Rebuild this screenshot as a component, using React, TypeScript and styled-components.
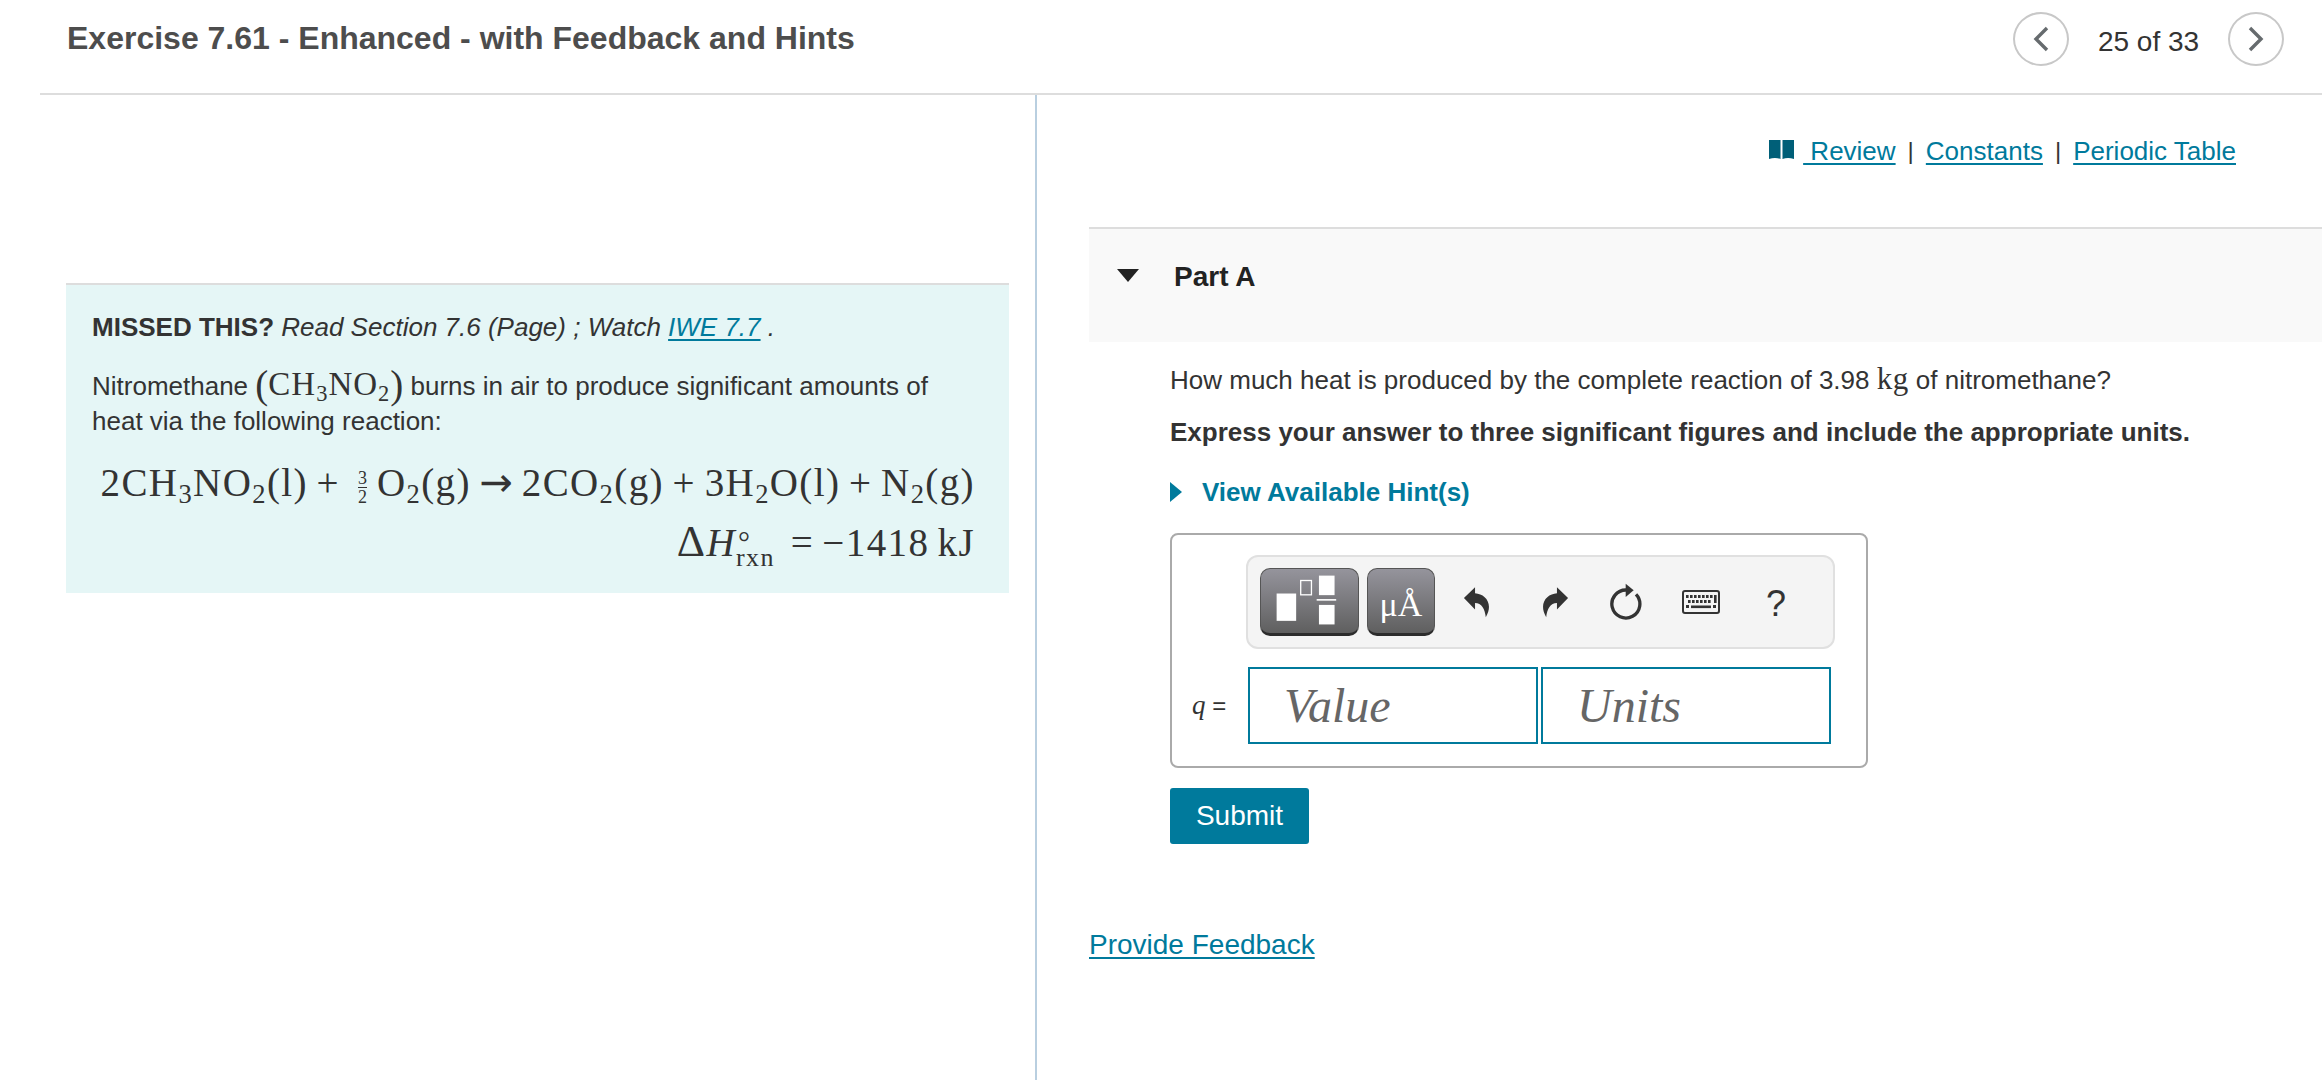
import React from "react";
import styled, { createGlobalStyle } from "styled-components";

const GlobalStyle = createGlobalStyle`
  html, body {
    margin: 0;
    padding: 0;
    background: #ffffff;
    font-family: "Liberation Sans", Arial, sans-serif;
    color: #333333;
  }
  * { box-sizing: border-box; }
`;

const Page = styled.div`
  width: 2322px;
  height: 1080px;
  overflow: hidden;
  padding-left: 40px;
  display: flex;
  flex-direction: column;
`;

const Header = styled.header`
  height: 95px;
  flex: none;
  display: flex;
  align-items: flex-start;
  justify-content: space-between;
  border-bottom: 2px solid #dddddd;
  padding: 12px 38px 0 27px;
`;

const Title = styled.h1`
  margin: 6px 0 0;
  font-size: 32px;
  line-height: 40px;
  font-weight: 700;
  color: #4d4d4d;
`;

const Pager = styled.div`
  display: flex;
  align-items: center;
  height: 54px;
`;

const PagerButton = styled.button`
  width: 56px;
  height: 54px;
  padding: 0;
  border: 2px solid #c8c8c8;
  border-radius: 50%;
  background: #ffffff;
  display: flex;
  align-items: center;
  justify-content: center;
`;

const PagerText = styled.span`
  font-size: 28px;
  line-height: 32px;
  width: 159px;
  text-align: center;
  margin-top: 6px;
`;

const Columns = styled.div`
  flex: 1;
  display: flex;
  min-height: 0;
`;

const LeftPane = styled.section`
  width: 997px;
  flex: none;
  border-right: 2px solid #b9cfe0;
  padding: 188px 26px 0 26px;
`;

const InfoBox = styled.div`
  height: 310px;
  background: #e5f6f6;
  border-top: 2px solid #dddddd;
  padding: 25px 34px 0 26px;
`;

const InfoLine = styled.p`
  margin: 0;
  font-size: 26px;
  line-height: 35px;
`;

const Watch = styled(InfoLine)`
  font-style: italic;
  margin-bottom: 24px;
  b {
    font-style: normal;
  }
`;

const TextLink = styled.a`
  color: #007a9c;
  text-decoration: underline;
  text-underline-offset: 3px;
`;

const MathText = styled.span`
  font-family: "Liberation Serif", "Times New Roman", serif;
  font-size: 33px;
  line-height: 0;
  letter-spacing: 1px;
`;

const KgText = styled(MathText)`
  font-size: 31px;
  letter-spacing: 0.4px;
`;

const InlineParen = styled.span`
  font-family: "Liberation Serif", serif;
  font-size: 1.5em;
  font-weight: 400;
  line-height: 0;
  vertical-align: -0.08em;
`;

const Sub = styled.sub`
  font-size: 0.68em;
  line-height: 0;
  vertical-align: -0.28em;
`;

const Equation = styled.div`
  font-family: "Liberation Serif", "Times New Roman", serif;
  font-size: 39px;
  line-height: 57px;
  letter-spacing: 1.4px;
  text-align: right;
  color: #333333;
  white-space: nowrap;
  margin-top: 15px;
`;

const Reaction = styled.div`
  height: 57px;
  word-spacing: -2.5px;
`;

const Enthalpy = styled.div`
  height: 57px;
  margin-top: 3px;
  word-spacing: -3px;
`;

const ReactionArrow = styled.span`
  font-family: "DejaVu Sans", sans-serif;
  font-size: 40px;
  font-weight: 400;
  letter-spacing: 0;
`;

const DeltaGlyph = styled.span`
  font-size: 44px;
  line-height: 0;
`;

const Fraction = styled.span`
  display: inline-flex;
  flex-direction: column;
  align-items: center;
  vertical-align: middle;
  font-size: 18px;
  line-height: 18px;
  letter-spacing: 0;
  margin: 0 10px 0 18px;
  span + span {
    border-top: 1.5px solid #333333;
  }
`;

const SupSub = styled.span`
  display: inline-flex;
  flex-direction: column;
  vertical-align: 4px;
  text-align: left;
  font-size: 26px;
  margin-right: 16px;
`;

const SupMark = styled.span`
  font-size: 30px;
  line-height: 15px;
  padding-left: 2px;
`;

const SubLabel = styled.span`
  line-height: 18px;
`;

const RightPane = styled.section`
  flex: 1;
  min-width: 0;
  padding-left: 52px;
`;

const TopLinks = styled.div`
  height: 132px;
  padding: 40px 86px 0 0;
  display: flex;
  justify-content: flex-end;
  align-items: flex-start;
  font-size: 26px;
  line-height: 32px;
`;

const BookIcon = styled.svg`
  width: 27px;
  height: 21px;
  margin: 4px 8px 0 0;
  flex: none;
`;

const Separator = styled.span`
  margin: 0 12px;
  font-size: 24px;
`;

const PartBand = styled.div`
  height: 115px;
  background: #f9f9f9;
  border-top: 2px solid #dddddd;
  padding: 32px 0 0 28px;
  display: flex;
  align-items: flex-start;
  gap: 35px;
`;

const CollapseArrow = styled.span`
  width: 0;
  height: 0;
  margin-top: 8px;
  border-left: 11px solid transparent;
  border-right: 11px solid transparent;
  border-top: 13px solid #222222;
`;

const PartTitle = styled.h2`
  margin: 0;
  font-size: 28px;
  line-height: 32px;
  font-weight: 700;
  color: #222222;
`;

const PartBody = styled.div`
  padding: 20px 0 0 81px;
`;

const Question = styled.p`
  margin: 0;
  font-size: 26px;
  line-height: 36px;
  color: #333333;
`;

const Instruction = styled.p`
  margin: 16px 0 0;
  font-size: 26px;
  line-height: 36px;
  font-weight: 700;
  color: #333333;
`;

const HintToggle = styled.div`
  margin-top: 26px;
  display: flex;
  align-items: center;
  gap: 20px;
  font-size: 26px;
  line-height: 32px;
  font-weight: 700;
  color: #007a9c;
`;

const HintArrow = styled.span`
  width: 0;
  height: 0;
  border-top: 10px solid transparent;
  border-bottom: 10px solid transparent;
  border-left: 12px solid #007a9c;
`;

const AnswerFrame = styled.div`
  width: 698px;
  height: 235px;
  margin-top: 25px;
  border: 2px solid #aaaaaa;
  border-radius: 8px;
  padding: 20px 0 0 74px;
`;

const Toolbar = styled.div`
  width: 589px;
  height: 94px;
  background: #f4f4f4;
  border: 2px solid #e0e0e0;
  border-radius: 12px;
  padding: 11px 0 0 12px;
  display: flex;
  align-items: flex-start;
`;

const TemplateButton = styled.div<{ $width: number }>`
  width: ${(p) => p.$width}px;
  height: 68px;
  margin-right: 8px;
  border: 1px solid #555555;
  border-bottom: 3px solid #2c2c2c;
  border-radius: 10px;
  background: linear-gradient(#95949c, #5f5f5f);
  color: #ffffff;
  display: flex;
  align-items: center;
  justify-content: center;
  flex: none;
`;

const UnitGlyphs = styled.span`
  font-family: "Liberation Serif", serif;
  font-size: 34px;
  line-height: 68px;
  margin-top: 8px;
`;

const ToolSlot = styled.div<{ $width: number }>`
  width: ${(p) => p.$width}px;
  height: 68px;
  display: flex;
  align-items: center;
  justify-content: center;
  flex: none;
  color: #333333;
`;

const HelpMark = styled.span`
  font-size: 36px;
  line-height: 40px;
  margin: 3px 0 0 2px;
  color: #333333;
`;

const InputRow = styled.div`
  display: flex;
  align-items: center;
  margin: 18px 0 0 -74px;
`;

const VarLabel = styled.span`
  width: 76px;
  padding-left: 20px;
  font-size: 24px;
  flex: none;
  i {
    font-family: "Liberation Serif", serif;
    font-size: 27px;
  }
`;

const AnswerInput = styled.input`
  width: 290px;
  height: 77px;
  margin-right: 3px;
  border: 2px solid #007a9c;
  background: #ffffff;
  padding: 0 0 0 34px;
  outline: none;
  font-family: "Liberation Serif", serif;
  font-style: italic;
  font-size: 48px;
  border-radius: 0;
  &::placeholder {
    color: #666666;
    opacity: 1;
  }
`;

const SubmitButton = styled.button`
  display: block;
  width: 139px;
  height: 56px;
  margin-top: 20px;
  border: none;
  border-radius: 3px;
  background: #007a9c;
  color: #ffffff;
  font-family: "Liberation Sans", Arial, sans-serif;
  font-size: 28px;
`;

const FeedbackLink = styled(TextLink)`
  display: block;
  width: fit-content;
  margin-top: 84px;
  font-size: 28px;
  line-height: 34px;
`;

function Chevron({ flip }: { flip?: boolean }) {
  return (
    <svg width="16" height="26" viewBox="0 0 16 26" style={{ transform: flip ? "scaleX(-1)" : undefined }}>
      <path d="M14 2 L3 13 L14 24" fill="none" stroke="#666b6e" strokeWidth="3.4" />
    </svg>
  );
}

function FractionIcon() {
  return (
    <svg width="99" height="68" viewBox="57 55 298 202">
      <rect x="105" y="133" width="60" height="84" fill="#fff" />
      <rect x="179" y="93" width="33" height="44" fill="none" stroke="#fff" strokeWidth="4" />
      <rect x="235" y="78" width="48" height="60" fill="#fff" />
      <rect x="228" y="150" width="60" height="5" fill="#fff" />
      <rect x="235" y="168" width="48" height="60" fill="#fff" />
    </svg>
  );
}

function UndoIcon({ flip }: { flip?: boolean }) {
  return (
    <svg width="28" height="32" viewBox="70 76 84 98" style={{ transform: flip ? "scaleX(-1)" : undefined }}>
      <path d="M72 113 L106 80 L106 98 C136 100 164 128 139 172 C136 146 126 128 106 128 L106 148 Z" fill="#333" />
    </svg>
  );
}

function RefreshIcon() {
  return (
    <svg width="34" height="38" viewBox="510 70 102 114">
      <path d="M562 91 A42 42 0 1 0 591 104" fill="none" stroke="#333" strokeWidth="10" />
      <path d="M560 72 L584 92 L560 112 Z" fill="#333" />
    </svg>
  );
}

function KeyboardIcon() {
  const top = [0, 1, 2, 3, 4, 5, 6];
  const mid = [0, 1, 2, 3, 4, 5];
  return (
    <svg width="38" height="24" viewBox="0 0 38 24">
      <rect x="1" y="1" width="36" height="22" rx="2" fill="#f4f4f4" stroke="#333" strokeWidth="2" />
      {top.map((n) => (
        <rect key={n} x={4 + n * 4} y="5" width="2.6" height="3" fill="#333" />
      ))}
      <rect x="32" y="5" width="2.6" height="8" fill="#333" />
      {mid.map((n) => (
        <rect key={n} x={6 + n * 4} y="10" width="2.6" height="3" fill="#333" />
      ))}
      <rect x="4" y="15" width="3" height="3" fill="#333" />
      <rect x="9" y="15.5" width="20" height="2.6" fill="#333" />
      <rect x="31" y="15" width="3" height="3" fill="#333" />
    </svg>
  );
}

function App() {
  return (
    <Page>
      <GlobalStyle />
      <Header>
        <Title>Exercise 7.61 - Enhanced - with Feedback and Hints</Title>
        <Pager>
          <PagerButton>
            <Chevron />
          </PagerButton>
          <PagerText>25 of 33</PagerText>
          <PagerButton>
            <Chevron flip />
          </PagerButton>
        </Pager>
      </Header>
      <Columns>
        <LeftPane>
          <InfoBox>
            <Watch>
              <b>MISSED THIS?</b> Read Section 7.6 (Page) ; Watch <TextLink>IWE 7.7</TextLink> .
            </Watch>
            <InfoLine>
              Nitromethane <InlineParen>(</InlineParen>
              <MathText>
                CH<Sub>3</Sub>NO<Sub>2</Sub>
              </MathText>
              <InlineParen>)</InlineParen> burns in air to produce significant amounts of
              <br />
              heat via the following reaction:
            </InfoLine>
            <Equation>
              <Reaction>
                2CH<Sub>3</Sub>NO<Sub>2</Sub>(l) +
                <Fraction>
                  <span>3</span>
                  <span>2</span>
                </Fraction>
                O<Sub>2</Sub>(g) <ReactionArrow>→</ReactionArrow> 2CO<Sub>2</Sub>(g) + 3H<Sub>2</Sub>O(l) + N<Sub>2</Sub>(g)
              </Reaction>
              <Enthalpy>
                <DeltaGlyph>Δ</DeltaGlyph>
                <i>H</i>
                <SupSub>
                  <SupMark>°</SupMark>
                  <SubLabel>rxn</SubLabel>
                </SupSub>
                = −1418 kJ
              </Enthalpy>
            </Equation>
          </InfoBox>
        </LeftPane>
        <RightPane>
          <TopLinks>
            <BookIcon viewBox="0 0 27 21">
              <path d="M1 1 H12.5 V20 C9 18.5 5 18.5 1 20 Z M14.5 1 H26 V20 C22 18.5 18 18.5 14.5 20 Z" fill="#005f78" />
            </BookIcon>
            <TextLink>&nbsp;Review</TextLink>
            <Separator>|</Separator>
            <TextLink>Constants</TextLink>
            <Separator>|</Separator>
            <TextLink>Periodic Table</TextLink>
          </TopLinks>
          <PartBand>
            <CollapseArrow />
            <PartTitle>Part A</PartTitle>
          </PartBand>
          <PartBody>
            <Question>
              How much heat is produced by the complete reaction of 3.98 <KgText>kg</KgText> of nitromethane?
            </Question>
            <Instruction>Express your answer to three significant figures and include the appropriate units.</Instruction>
            <HintToggle>
              <HintArrow />
              View Available Hint(s)
            </HintToggle>
            <AnswerFrame>
              <Toolbar>
                <TemplateButton $width={99}>
                  <FractionIcon />
                </TemplateButton>
                <TemplateButton $width={68}>
                  <UnitGlyphs>μÅ</UnitGlyphs>
                </TemplateButton>
                <ToolSlot $width={68}>
                  <UndoIcon />
                </ToolSlot>
                <ToolSlot $width={87}>
                  <UndoIcon flip />
                </ToolSlot>
                <ToolSlot $width={56}>
                  <RefreshIcon />
                </ToolSlot>
                <ToolSlot $width={94}>
                  <KeyboardIcon />
                </ToolSlot>
                <ToolSlot $width={54}>
                  <HelpMark>?</HelpMark>
                </ToolSlot>
              </Toolbar>
              <InputRow>
                <VarLabel>
                  <i>q</i> =
                </VarLabel>
                <AnswerInput placeholder="Value" readOnly />
                <AnswerInput placeholder="Units" readOnly />
              </InputRow>
            </AnswerFrame>
            <SubmitButton>Submit</SubmitButton>
          </PartBody>
          <FeedbackLink>Provide Feedback</FeedbackLink>
        </RightPane>
      </Columns>
    </Page>
  );
}

export default App;
